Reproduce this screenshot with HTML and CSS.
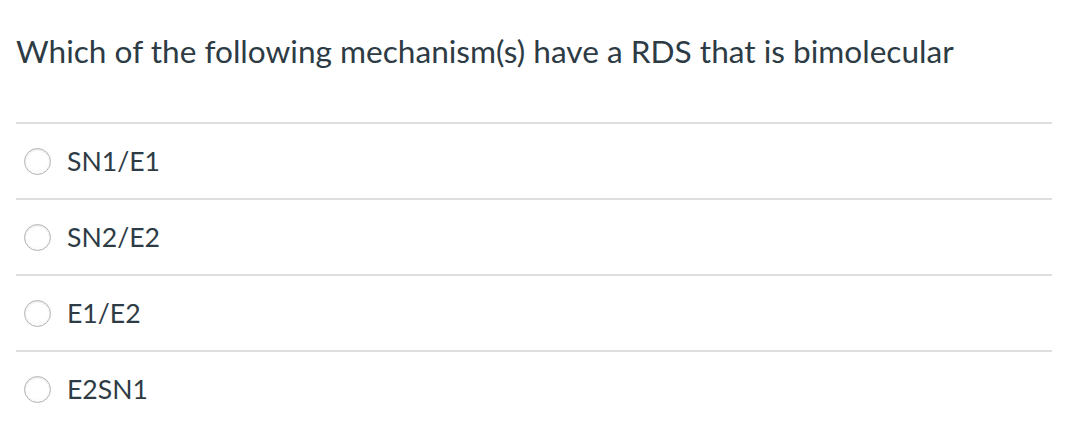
FILE: index.html
```html
<!DOCTYPE html>
<html>
<head>
<meta charset="utf-8">
<link rel="stylesheet" href="styles.css">
</head>
<body>
<div class="question">
  <div class="prompt">Which of the following mechanism(s) have a RDS that is bimolecular</div>
  <div class="answers">
    <label class="answer"><span class="radio"></span><span class="text">SN1/E1</span></label>
    <label class="answer"><span class="radio"></span><span class="text">SN2/E2</span></label>
    <label class="answer"><span class="radio"></span><span class="text">E1/E2</span></label>
    <label class="answer"><span class="radio"></span><span class="text">E2SN1</span></label>
  </div>
</div>
</body>
</html>
```

FILE: styles.css
```css
html, body {
  margin: 0;
  padding: 0;
  background: #ffffff;
}
body {
  font-family: Lato, "Liberation Sans", sans-serif;
  color: #2d3b45;
}
.question {
  padding: 0 22px 0 16px;
}
.prompt {
  font-size: 31.6px;
  line-height: 38px;
  padding-top: 32px;
  height: 122px;
  box-sizing: border-box;
}
.answers {
  display: flex;
  flex-direction: column;
}
.answer {
  display: flex;
  align-items: center;
  height: 76px;
  border-top: 2px solid #dedede;
  box-sizing: border-box;
  padding-left: 8px;
  gap: 16px;
}
.radio {
  width: 27px;
  height: 27px;
  border-radius: 50%;
  border: 1px solid #b5b5b5;
  box-sizing: border-box;
  background: radial-gradient(circle at 50% 40%, #ffffff 55%, #f1f1f1 100%);
  box-shadow: inset 0 1px 2px rgba(0,0,0,0.12);
}
.text {
  font-size: 26.6px;
  line-height: 30px;
}
```
